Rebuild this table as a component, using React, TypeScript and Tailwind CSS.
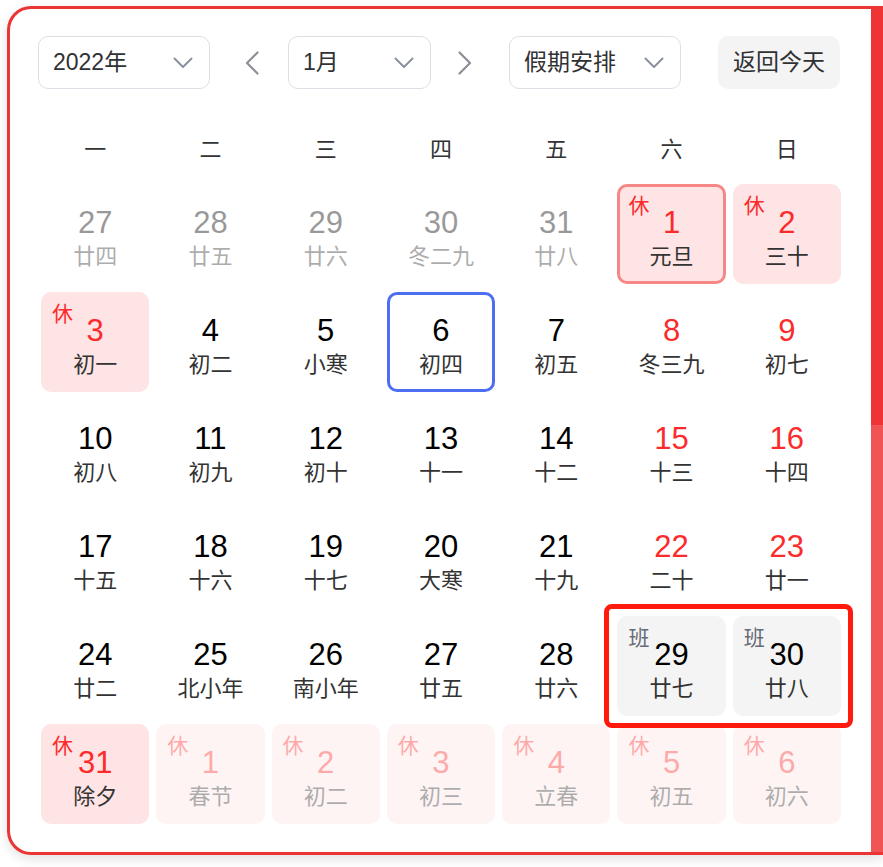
import React from 'react';

type Day = {
  d: number;
  lunar: string;
  tag?: '休' | '班';
  other?: boolean;
  weekend?: boolean;
  today?: boolean;
  selected?: boolean;
};

const weekdays = ['一', '二', '三', '四', '五', '六', '日'];

const days: Day[] = [
  { d: 27, lunar: '廿四', other: true },
  { d: 28, lunar: '廿五', other: true },
  { d: 29, lunar: '廿六', other: true },
  { d: 30, lunar: '冬二九', other: true },
  { d: 31, lunar: '廿八', other: true },
  { d: 1, lunar: '元旦', tag: '休', weekend: true, selected: true },
  { d: 2, lunar: '三十', tag: '休', weekend: true },

  { d: 3, lunar: '初一', tag: '休' },
  { d: 4, lunar: '初二' },
  { d: 5, lunar: '小寒' },
  { d: 6, lunar: '初四', today: true },
  { d: 7, lunar: '初五' },
  { d: 8, lunar: '冬三九', weekend: true },
  { d: 9, lunar: '初七', weekend: true },

  { d: 10, lunar: '初八' },
  { d: 11, lunar: '初九' },
  { d: 12, lunar: '初十' },
  { d: 13, lunar: '十一' },
  { d: 14, lunar: '十二' },
  { d: 15, lunar: '十三', weekend: true },
  { d: 16, lunar: '十四', weekend: true },

  { d: 17, lunar: '十五' },
  { d: 18, lunar: '十六' },
  { d: 19, lunar: '十七' },
  { d: 20, lunar: '大寒' },
  { d: 21, lunar: '十九' },
  { d: 22, lunar: '二十', weekend: true },
  { d: 23, lunar: '廿一', weekend: true },

  { d: 24, lunar: '廿二' },
  { d: 25, lunar: '北小年' },
  { d: 26, lunar: '南小年' },
  { d: 27, lunar: '廿五' },
  { d: 28, lunar: '廿六' },
  { d: 29, lunar: '廿七', tag: '班' },
  { d: 30, lunar: '廿八', tag: '班' },

  { d: 31, lunar: '除夕', tag: '休' },
  { d: 1, lunar: '春节', tag: '休', other: true },
  { d: 2, lunar: '初二', tag: '休', other: true },
  { d: 3, lunar: '初三', tag: '休', other: true },
  { d: 4, lunar: '立春', tag: '休', other: true },
  { d: 5, lunar: '初五', tag: '休', other: true, weekend: true },
  { d: 6, lunar: '初六', tag: '休', other: true, weekend: true },
];

function ChevronDown() {
  return (
    <svg width="20" height="12" viewBox="0 0 20 12" fill="none">
      <path d="M1.5 1.5 L10 10 L18.5 1.5" stroke="#8b929e" strokeWidth="2" strokeLinecap="round" strokeLinejoin="round" />
    </svg>
  );
}

function Arrow({ dir }: { dir: 'left' | 'right' }) {
  return (
    <svg width="16" height="24" viewBox="0 0 16 24" fill="none">
      <path
        d={dir === 'left' ? 'M13.5 1.5 L3 12 L13.5 22.5' : 'M2.5 1.5 L13 12 L2.5 22.5'}
        stroke="#8c8f96"
        strokeWidth="2.2"
        strokeLinecap="round"
        strokeLinejoin="round"
      />
    </svg>
  );
}

function Select({ label, width }: { label: string; width: string }) {
  return (
    <div className={`flex h-[53px] ${width} items-center justify-between rounded-[10px] border border-[#dcdfe6] bg-white pl-[14px] pr-[16px] text-[23px] text-[#303133]`}>
      <span>{label}</span>
      <ChevronDown />
    </div>
  );
}

function Cell({ day }: { day: Day }) {
  const red = day.tag === '休' || (day.weekend && day.tag !== '班');
  let box = 'border-transparent';
  if (day.tag === '休') box = 'border-transparent bg-[#fee4e4]';
  if (day.tag === '班') box = 'border-transparent bg-[#f4f4f4]';
  if (day.selected) box = 'border-[#f58787] bg-[#fee4e4]';
  if (day.today) box = 'border-[#4d6ef2]';

  return (
    <div className={`relative h-[100px] rounded-[10px] border-[3px] ${box} ${day.other ? 'opacity-40' : ''}`}>
      {day.tag && (
        <span className={`absolute left-[8px] top-[8px] text-[21px] leading-none ${day.tag === '休' ? 'text-[#fb2b2b]' : 'text-[#666c76]'}`}>
          {day.tag}
        </span>
      )}
      <div className="flex flex-col items-center pt-[20px]">
        <span className={`text-[31px] leading-none ${red ? 'text-[#fb2b2b]' : 'text-black'}`}>{day.d}</span>
        <span className="mt-[8px] text-[22px] leading-none text-[#333]">{day.lunar}</span>
      </div>
    </div>
  );
}

export default function App() {
  return (
    <div
      className="min-h-screen bg-white"
      style={{ fontFamily: '"Liberation Sans", "Noto Sans CJK SC", sans-serif' }}
    >
      <div className="pl-[7px] pt-[6px]">
        <div className="flex h-[849px] rounded-l-[24px] border-y-[3px] border-l-[3px] border-[#eb3434] bg-white shadow-[0_4px_12px_rgba(0,0,0,0.12)]">
          <div className="flex-1 pl-[28px] pt-[27px]">
            {/* Toolbar */}
            <div className="flex items-center">
              <Select label="2022年" width="w-[172px]" />
              <div className="ml-[22px] flex w-[40px] justify-center">
                <Arrow dir="left" />
              </div>
              <div className="ml-[16px]">
                <Select label="1月" width="w-[143px]" />
              </div>
              <div className="ml-[14px] flex w-[40px] justify-center">
                <Arrow dir="right" />
              </div>
              <div className="ml-[24px]">
                <Select label="假期安排" width="w-[172px]" />
              </div>
              <button className="ml-[37px] flex h-[53px] w-[122px] items-center justify-center rounded-[10px] bg-[#f4f4f5] text-[23px] text-[#303133]">
                返回今天
              </button>
            </div>

            {/* Weekday header */}
            <div className="ml-[3px] mt-[41px] grid h-[40px] w-[800px] grid-cols-7 gap-x-[7px]">
              {weekdays.map((w) => (
                <div key={w} className="text-center text-[22px] leading-[40px] text-[#333]">
                  {w}
                </div>
              ))}
            </div>

            {/* Days */}
            <div className="relative ml-[3px] mt-[14px] grid w-[800px] grid-cols-7 gap-x-[7px] gap-y-[8px]">
              {days.map((day, i) => (
                <Cell key={i} day={day} />
              ))}
              {/* annotation frame */}
              <div className="pointer-events-none absolute left-[563px] top-[420px] h-[124px] w-[249px] rounded-[8px] border-[5px] border-[#ff1a0d]" />
            </div>
          </div>

          {/* Scrollbar */}
          <div className="flex w-[12px] flex-col">
            <div className="h-[416px] bg-[#ee3434]" />
            <div className="flex-1 bg-[#f05555]" />
          </div>
        </div>
      </div>
    </div>
  );
}
